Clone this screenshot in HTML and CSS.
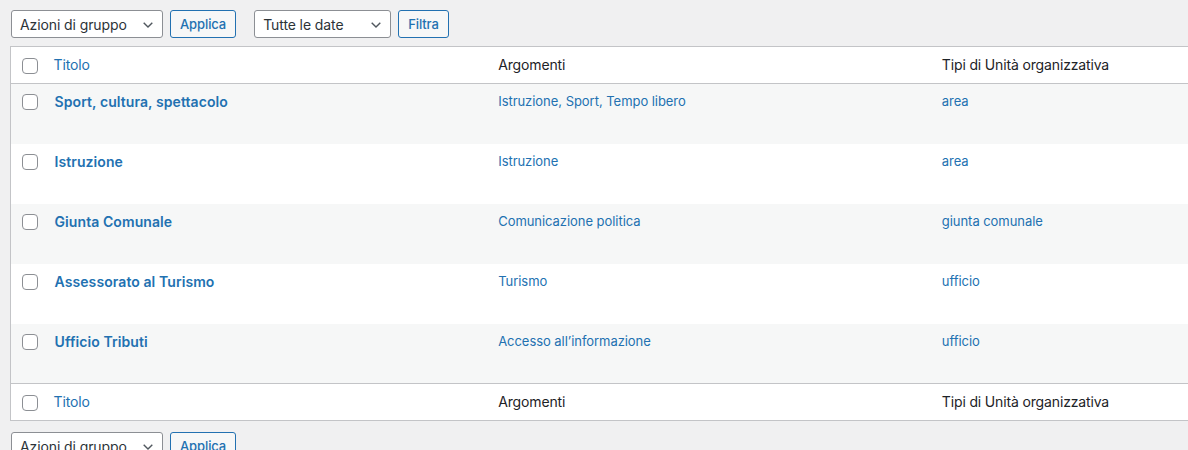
FILE: index.html
```html
<!DOCTYPE html>
<html lang="it">
<head>
<meta charset="utf-8">
<title>Unità organizzative</title>
<link rel="stylesheet" href="styles.css">
</head>
<body>
<div class="wrap">
  <div class="tablenav top">
    <div class="actions">
      <div class="select sel-bulk"><span>Azioni di gruppo</span><svg class="chev" viewBox="0 0 10 6" width="10" height="6"><polyline points="0.7,0.7 5,5 9.3,0.7" fill="none" stroke="#50575e" stroke-width="1.4"/></svg></div>
      <button class="button">Applica</button>
    </div>
    <div class="actions">
      <div class="select sel-date"><span>Tutte le date</span><svg class="chev" viewBox="0 0 10 6" width="10" height="6"><polyline points="0.7,0.7 5,5 9.3,0.7" fill="none" stroke="#50575e" stroke-width="1.4"/></svg></div>
      <button class="button">Filtra</button>
    </div>
  </div>

  <table class="list">
    <colgroup>
      <col class="c-check"><col class="c-title"><col class="c-arg"><col class="c-tipi">
    </colgroup>
    <thead>
      <tr>
        <td class="check"><span class="cb"></span></td>
        <th><a class="link">Titolo</a></th>
        <th>Argomenti</th>
        <th>Tipi di Unità organizzativa</th>
      </tr>
    </thead>
    <tbody>
      <tr class="alt">
        <td class="check"><span class="cb"></span></td>
        <td><a class="row-title">Sport, cultura, spettacolo</a></td>
        <td><a class="link">Istruzione</a>, <a class="link">Sport</a>, <a class="link">Tempo libero</a></td>
        <td><a class="link">area</a></td>
      </tr>
      <tr>
        <td class="check"><span class="cb"></span></td>
        <td><a class="row-title">Istruzione</a></td>
        <td><a class="link">Istruzione</a></td>
        <td><a class="link">area</a></td>
      </tr>
      <tr class="alt">
        <td class="check"><span class="cb"></span></td>
        <td><a class="row-title">Giunta Comunale</a></td>
        <td><a class="link">Comunicazione politica</a></td>
        <td><a class="link">giunta comunale</a></td>
      </tr>
      <tr>
        <td class="check"><span class="cb"></span></td>
        <td><a class="row-title">Assessorato al Turismo</a></td>
        <td><a class="link">Turismo</a></td>
        <td><a class="link">ufficio</a></td>
      </tr>
      <tr class="alt">
        <td class="check"><span class="cb"></span></td>
        <td><a class="row-title">Ufficio Tributi</a></td>
        <td><a class="link">Accesso all’informazione</a></td>
        <td><a class="link">ufficio</a></td>
      </tr>
    </tbody>
    <tfoot>
      <tr>
        <td class="check"><span class="cb"></span></td>
        <th><a class="link">Titolo</a></th>
        <th>Argomenti</th>
        <th>Tipi di Unità organizzativa</th>
      </tr>
    </tfoot>
  </table>

  <div class="tablenav bottom">
    <div class="actions">
      <div class="select sel-bulk"><span>Azioni di gruppo</span><svg class="chev" viewBox="0 0 10 6" width="10" height="6"><polyline points="0.7,0.7 5,5 9.3,0.7" fill="none" stroke="#50575e" stroke-width="1.4"/></svg></div>
      <button class="button">Applica</button>
    </div>
  </div>
</div>
</body>
</html>
```

FILE: styles.css
```css
html, body {
  margin: 0;
  padding: 0;
  overflow: hidden;
  background: #f0f0f1;
}
body {
  font-family: Inter, "Noto Sans", "Liberation Sans", sans-serif;
  font-size: 13px;
  color: #2c3338;
}
.wrap {
  padding: 10px 0 0 10px;
}
.tablenav {
  display: flex;
  gap: 18px;
  height: 28px;
  padding-left: 1px;
}
.tablenav.bottom {
  margin-top: 11px;
}
.actions {
  display: flex;
  gap: 7px;
}
.select {
  box-sizing: border-box;
  height: 28px;
  border: 1px solid #8c8f94;
  border-radius: 3px;
  background: #fff;
  display: flex;
  align-items: center;
  justify-content: space-between;
  padding: 0 9px 0 8px;
  font-size: 14px;
  letter-spacing: -0.1px;
  color: #2c3338;
}
.sel-bulk { width: 152px; }
.sel-date { width: 137px; }
.chev { display: block; margin-top: 1px; }
.button {
  box-sizing: border-box;
  height: 28px;
  padding: 0 9px;
  border: 1px solid #2271b1;
  border-radius: 3px;
  background: #f6f7f7;
  color: #2271b1;
  font-family: inherit;
  font-size: 13px;
  font-weight: 500;
  letter-spacing: -0.1px;
}
.list {
  margin-top: 8px;
  table-layout: fixed;
  width: 1366px;
  border-collapse: collapse;
  border: 1px solid #c3c4c7;
  background: #fff;
}
.c-check { width: 33px; }
.c-title { width: 444px; }
.c-arg { width: 443px; }
.c-tipi { width: 443px; }
.list th {
  text-align: left;
  font-weight: 400;
  font-size: 14px;
  letter-spacing: -0.15px;
  color: #1d2327;
  padding: 8px 10px;
  line-height: 20px;
  height: 20px;
}
.list thead tr { border-bottom: 1px solid #c3c4c7; }
.list tfoot tr { border-top: 1px solid #c3c4c7; }
.list td {
  vertical-align: top;
  padding: 8px 10px;
  line-height: 19.5px;
  height: 43px;
  color: #2271b1;
}
.list thead td, .list tfoot td { height: 20px; }
.list tbody tr { height: 60px; }
.list tr.alt { background: #f6f7f7; }
.list td.check {
  padding: 11px 0 0 11px;
}
.list tbody td.check { padding-top: 10px; }
.cb {
  display: block;
  box-sizing: border-box;
  width: 16px;
  height: 16px;
  border: 1px solid #8c8f94;
  border-radius: 4px;
  background: #fff;
}
.link, .row-title {
  color: #2271b1;
  text-decoration: none;
}
.list td .link { font-size: 13px; letter-spacing: -0.05px; }
.row-title {
  font-size: 14px;
  font-weight: 600;
  letter-spacing: 0.08px;
  display: inline-block;
  padding-left: 1px;
}
.list th .link { font-size: 14px; }
```
